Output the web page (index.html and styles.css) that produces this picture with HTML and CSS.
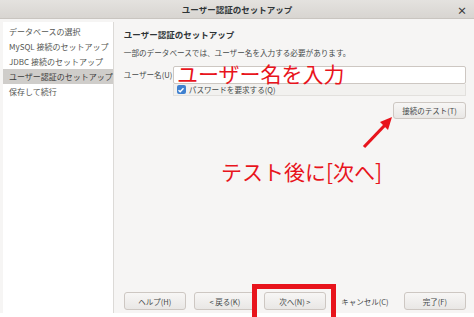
FILE: index.html
```html
<!DOCTYPE html>
<html lang="ja">
<head>
    <meta charset="UTF-8">
    <title>ユーザー認証のセットアップ</title>
    <link rel="stylesheet" href="styles.css">
</head>
<body>

<div class="window">
    <div class="titlebar">
        <span class="title">ユーザー認証のセットアップ</span>
        <span class="close">×</span>
    </div>

    <div class="main">
        <ul class="steps">
            <li class="step">データベースの選択</li>
            <li class="step">MySQL 接続のセットアップ</li>
            <li class="step">JDBC 接続のセットアップ</li>
            <li class="step active">ユーザー認証のセットアップ</li>
            <li class="step">保存して続行</li>
        </ul>

        <div class="content">
            <div class="page">
                <h1 class="heading">ユーザー認証のセットアップ</h1>
                <p class="desc">一部のデータベースでは、ユーザー名を入力する必要があります。</p>

                <div class="form-row">
                    <label class="label">ユーザー名(U)</label>
                    <div class="field-col">
                        <input class="text-input" type="text">
                        <div class="check-row">
                            <span class="checkbox">
                                <svg width="8" height="8" viewBox="0 0 8 8">
                                    <path d="M1.5 4.2 L3.2 5.8 L6.5 2.2" fill="none" stroke="#fff" stroke-width="1.4"/>
                                </svg>
                            </span>
                            <span>パスワードを要求する(Q)</span>
                        </div>
                    </div>
                </div>

                <div class="test-row">
                    <button class="btn">接続のテスト(T)</button>
                </div>
            </div>

            <div class="buttons">
                <button class="btn wide">ヘルプ(H)</button>
                <button class="btn wide">&lt; 戻る(K)</button>
                <button class="btn wide">次へ(N) &gt;</button>
                <button class="btn wide flat">キャンセル(C)</button>
                <button class="btn wide">完了(F)</button>
            </div>
        </div>
    </div>
    <div class="bottom-strip"></div>

    <!-- annotations drawn over the dialog -->
    <div class="note note-user">ユーザー名を入力</div>
    <div class="note note-next">テスト後に[次へ]</div>
    <svg class="arrow" width="40" height="40" viewBox="0 0 40 40">
        <line x1="3" y1="35" x2="25" y2="12" stroke="#e8141c" stroke-width="3.2"/>
        <polygon points="31,5 19,10 27,18" fill="#e8141c"/>
    </svg>
    <div class="red-box"></div>
</div>

</body>
</html>
```

FILE: styles.css
```css
* {
    box-sizing: border-box;
}

body {
    margin: 0;
    font-family: "Noto Sans CJK JP", "Noto Sans", sans-serif;
    font-size: 8px;
    color: #2e3436;
}

.window {
    position: relative;
    width: 474px;
    height: 317px;
    display: flex;
    flex-direction: column;
    background: #f6f5f4;
    overflow: hidden;
}

.titlebar {
    height: 19px;
    display: flex;
    align-items: center;
    justify-content: center;
    position: relative;
    background: linear-gradient(#e4e2df, #d8d5d1);
    border-bottom: 1px solid #c9c5c0;
}

.title {
    font-weight: bold;
    font-size: 8.5px;
    color: #2e3436;
}

.close {
    position: absolute;
    right: 7px;
    top: 3px;
    font-size: 10px;
    font-weight: bold;
    color: #3a3a3a;
}

.main {
    flex: 1;
    display: flex;
    min-height: 0;
}

.steps {
    list-style: none;
    margin: 3px 0 0 3px;
    padding: 2px 0 0;
    width: 111px;
    background: #fff;
    border-right: 1px solid #dcdad7;
}

.step {
    height: 15px;
    line-height: 15px;
    padding-left: 6px;
    color: #555753;
    white-space: nowrap;
}

.step.active {
    background: #cfcdca;
    color: #3c3c3c;
}

.content {
    flex: 1;
    display: flex;
    flex-direction: column;
    justify-content: space-between;
    padding: 9px 13px 3px 10px;
}

.heading {
    margin: 0;
    font-size: 8.5px;
    line-height: 12px;
    font-weight: bold;
    color: #2e3436;
}

.desc {
    margin: 7px 0 0;
    font-size: 7.6px;
    line-height: 12px;
    color: #45494a;
}

.form-row {
    display: flex;
    margin-top: 7px;
}

.label {
    width: 49px;
    height: 18px;
    line-height: 18px;
    font-size: 7.6px;
    color: #45494a;
    white-space: nowrap;
}

.field-col {
    flex: 1;
    display: flex;
    flex-direction: column;
}

.text-input {
    height: 18px;
    margin: 0;
    border: 1px solid #cdc7c2;
    border-radius: 2px;
    background: #fff;
}

.check-row {
    height: 12px;
    display: flex;
    align-items: center;
    gap: 3px;
    padding-left: 3px;
    font-size: 7.6px;
    border: 1px solid #e2e0dd;
    border-top: none;
    background: #f2f1ef;
    color: #45494a;
}

.checkbox {
    width: 9px;
    height: 9px;
    border-radius: 2px;
    background: #3f80cf;
    display: flex;
    align-items: center;
    justify-content: center;
}

.test-row {
    display: flex;
    justify-content: flex-end;
    margin-top: 6px;
}

.btn {
    height: 17px;
    padding: 0 8px;
    font-family: inherit;
    font-size: 7.5px;
    color: #45494a;
    white-space: nowrap;
    background: linear-gradient(#f7f6f5, #e9e7e5);
    border: 1px solid #cdc7c2;
    border-radius: 3px;
}

.buttons {
    display: flex;
    justify-content: flex-end;
    gap: 8px;
}

.wide {
    width: 62px;
    height: 18px;
    padding: 0;
}

.flat {
    background: transparent;
    border-color: transparent;
}

.bottom-strip {
    height: 4px;
    background: #fff;
}

.note {
    position: absolute;
    color: #e8141c;
    font-size: 21px;
    line-height: 1;
    white-space: nowrap;
}

.note-user {
    left: 177px;
    top: 63px;
}

.note-next {
    left: 221px;
    top: 161px;
}

.arrow {
    position: absolute;
    left: 361px;
    top: 112px;
}

.red-box {
    position: absolute;
    left: 252px;
    top: 284px;
    width: 84px;
    height: 40px;
    border: 5px solid #e8141c;
}
```
